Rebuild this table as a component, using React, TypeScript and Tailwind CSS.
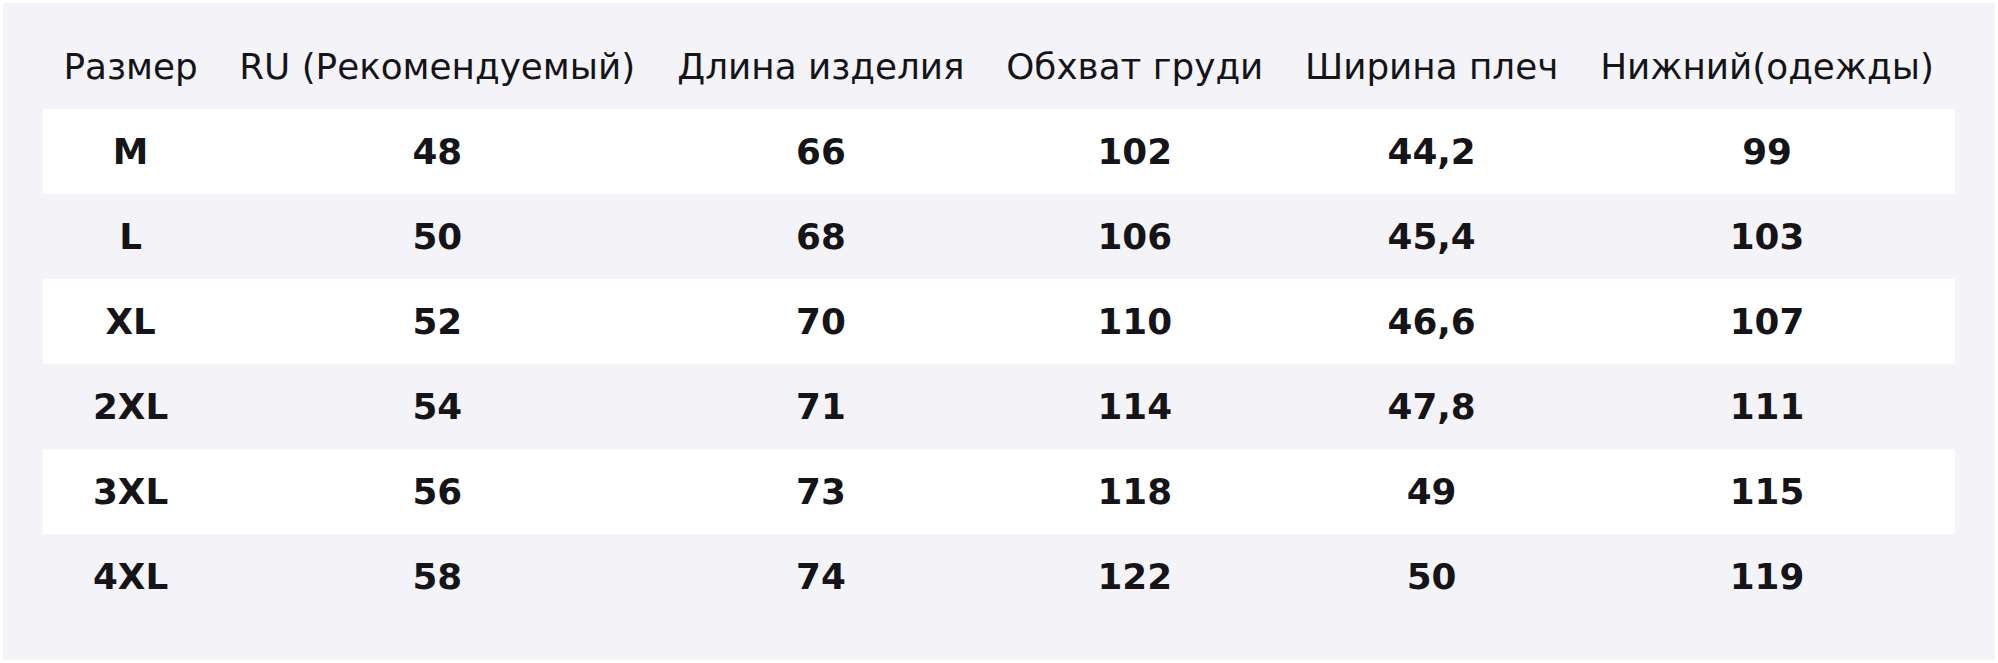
import React from "react";

// Таблица размеров
const headers = [
  "Размер",
  "RU (Рекомендуемый)",
  "Длина изделия",
  "Обхват груди",
  "Ширина плеч",
  "Нижний(одежды)",
];

const rows: string[][] = [
  ["M", "48", "66", "102", "44,2", "99"],
  ["L", "50", "68", "106", "45,4", "103"],
  ["XL", "52", "70", "110", "46,6", "107"],
  ["2XL", "54", "71", "114", "47,8", "111"],
  ["3XL", "56", "73", "118", "49", "115"],
  ["4XL", "58", "74", "122", "50", "119"],
];

export default function App() {
  return (
    <div className="w-[1998px] h-[663px] bg-white p-[3px] font-['DejaVu_Sans',sans-serif] text-[#141419]">
      <div className="h-full bg-[#f4f3f8] px-[40px] pt-[21px]">
        <table className="w-full border-collapse">
          <thead>
            <tr className="h-[85px]">
              {headers.map((h) => (
                <th
                  key={h}
                  className="px-[20px] text-center text-[35.75px] font-normal whitespace-nowrap"
                >
                  {h}
                </th>
              ))}
            </tr>
          </thead>
          <tbody>
            {rows.map((row, i) => (
              <tr
                key={row[0]}
                className={i % 2 === 0 ? "h-[85px] bg-white" : "h-[85px]"}
              >
                {row.map((cell, j) => (
                  <td
                    key={j}
                    className="px-[20px] text-center text-[35.75px] font-bold whitespace-nowrap"
                  >
                    {cell}
                  </td>
                ))}
              </tr>
            ))}
          </tbody>
        </table>
      </div>
    </div>
  );
}
